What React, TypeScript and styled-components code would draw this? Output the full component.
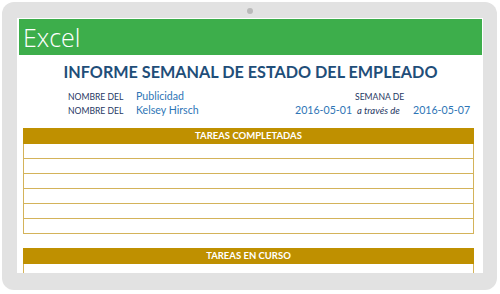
import React from "react";
import styled, { createGlobalStyle } from "styled-components";

const Global = createGlobalStyle`
  html, body { margin: 0; padding: 0; background: #ffffff; }
  body { font-family: Lato, "Open Sans", sans-serif; }
  * { box-sizing: border-box; }
`;

const Page = styled.div`
  width: 500px;
  height: 294px;
  padding: 2px 3px 4px 2px;
`;

const Frame = styled.div`
  position: relative;
  width: 495px;
  height: 288px;
  background: #e2e2e2;
  border-radius: 12px;
  padding: 16px 14px 17px 15px;
`;

const Camera = styled.div`
  position: absolute;
  top: 6px;
  left: 245px;
  width: 6px;
  height: 6px;
  border-radius: 50%;
  background: #b9b9b9;
`;

const Screen = styled.div`
  width: 466px;
  height: 255px;
  background: #ffffff;
  overflow: hidden;
  padding: 1px 1px 0 2px;
  display: flex;
  flex-direction: column;
`;

const Header = styled.div`
  height: 36px;
  background: #3dae4b;
  display: flex;
  align-items: center;
  padding-left: 4px;
  flex-shrink: 0;
`;

const Brand = styled.span`
  color: #ffffff;
  font-family: "Open Sans", sans-serif;
  font-weight: 300;
  font-size: 25px;
  line-height: 1;
  margin-top: 1px;
`;

const Title = styled.h1`
  margin: 7px 0 0;
  text-align: center;
  font-family: Lato, sans-serif;
  font-weight: 700;
  font-size: 16.2px;
  line-height: 20px;
  color: #1f4e79;
`;

const InfoRow = styled.div<{ $top: number }>`
  display: flex;
  align-items: baseline;
  height: 14px;
  line-height: 14px;
  margin: ${(p) => p.$top}px 0 0 49px;
`;

const Cell = styled.div<{ $w?: number }>`
  flex: 0 0 ${(p) => (p.$w ? `${p.$w}px` : "auto")};
  white-space: nowrap;
`;

const Label = styled.span`
  font-family: Lato, sans-serif;
  font-size: 8.6px;
  color: #1f3864;
`;

const Value = styled.span`
  font-family: Lato, sans-serif;
  font-size: 10.6px;
  color: #2e75b6;
`;

const Through = styled.span`
  font-family: Lato, sans-serif;
  font-style: italic;
  font-size: 9.5px;
  color: #1f3864;
`;

const Section = styled.div<{ $top: number }>`
  margin: ${(p) => p.$top}px 8px 0 4px;
  border: 1px solid #d4b35a;
  border-top: none;
  flex-shrink: 0;
`;

const SectionHead = styled.div`
  height: 16px;
  background: #bf9000;
  color: #ffffff;
  font-family: Lato, sans-serif;
  font-weight: 700;
  font-size: 9.5px;
  line-height: 16px;
  text-align: center;
  margin: 0 -1px;
`;

const Row = styled.div`
  height: 15px;
  border-bottom: 1px solid #d4b35a;
  &:last-child { border-bottom: none; height: 14px; }
`;

export default function App() {
  return (
    <>
      <Global />
      <Page>
        <Frame>
          <Camera />
          <Screen>
            <Header>
              <Brand>Excel</Brand>
            </Header>
            <Title>INFORME SEMANAL DE ESTADO DEL EMPLEADO</Title>
            <InfoRow $top={5}>
              <Cell $w={68}><Label>NOMBRE DEL</Label></Cell>
              <Cell $w={219}><Value>Publicidad</Value></Cell>
              <Cell><Label>SEMANA DE</Label></Cell>
            </InfoRow>
            <InfoRow $top={0}>
              <Cell $w={68}><Label>NOMBRE DEL</Label></Cell>
              <Cell $w={159}><Value>Kelsey Hirsch</Value></Cell>
              <Cell $w={62}><Value>2016-05-01</Value></Cell>
              <Cell $w={56}><Through>a través de</Through></Cell>
              <Cell><Value>2016-05-07</Value></Cell>
            </InfoRow>
            <Section $top={13}>
              <SectionHead>TAREAS COMPLETADAS</SectionHead>
              <Row />
              <Row />
              <Row />
              <Row />
              <Row />
              <Row />
            </Section>
            <Section $top={14}>
              <SectionHead>TAREAS EN CURSO</SectionHead>
              <Row />
              <Row />
            </Section>
          </Screen>
        </Frame>
      </Page>
    </>
  );
}
